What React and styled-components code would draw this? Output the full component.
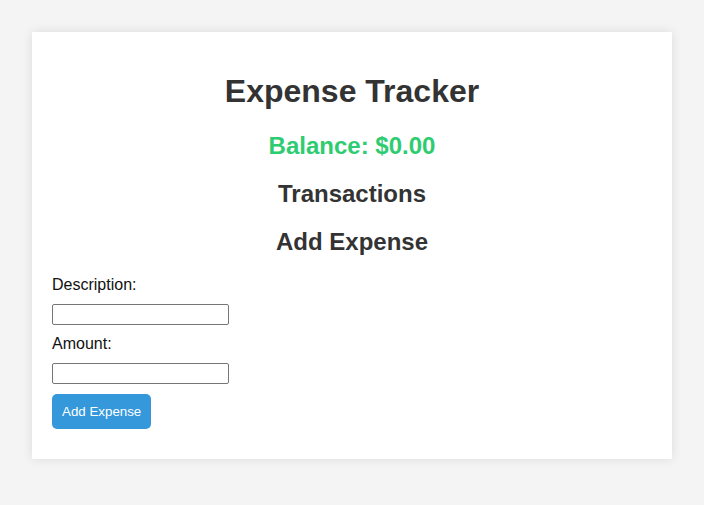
import React from "react";
import styled, { createGlobalStyle } from "styled-components";

const GlobalStyle = createGlobalStyle`
  html, body {
    margin: 0;
    padding: 0;
    background: #f4f4f4;
    font-family: "Liberation Sans", Arial, sans-serif;
    color: #333;
  }
`;

const Page = styled.div`
  padding: 32px 0;
`;

const Card = styled.div`
  width: 600px;
  margin: 0 auto;
  background: #fff;
  padding: 20px 20px 30px;
  box-shadow: 0 0 10px rgba(0, 0, 0, 0.1);
`;

const Title = styled.h1`
  font-size: 32px;
  font-weight: bold;
  text-align: center;
  margin: 21.44px 0;
  color: #333;
`;

const Heading = styled.h2`
  font-size: 24px;
  font-weight: bold;
  text-align: center;
  margin: 19.92px 0;
  color: ${(p) => (p.$accent ? "#2ecc71" : "#333")};
`;

const List = styled.ul`
  list-style: none;
  padding: 0;
  margin: 16px 0;
`;

const Form = styled.form`
  display: block;
`;

const Label = styled.label`
  display: block;
  font-size: 16px;
  color: #111;
  margin-bottom: 10px;
`;

const Input = styled.input`
  display: block;
  box-sizing: border-box;
  width: 177px;
  height: 21px;
  margin: 0 0 10px;
  padding: 1px 2px;
  border: 1px solid #767676;
  border-radius: 2px;
  font-family: "Liberation Sans", Arial, sans-serif;
  font-size: 13.33px;
  background: #fff;
`;

const Button = styled.button`
  display: block;
  background: #3498db;
  color: #fff;
  border: none;
  border-radius: 5px;
  padding: 10px;
  font-family: "Liberation Sans", Arial, sans-serif;
  font-size: 13.33px;
  line-height: normal;
  cursor: pointer;
`;

export default function App() {
  return (
    <>
      <GlobalStyle />
      <Page>
        <Card>
          <Title>Expense Tracker</Title>
          <Heading $accent>Balance: $0.00</Heading>
          <Heading>Transactions</Heading>
          <List />
          <Heading>Add Expense</Heading>
          <Form onSubmit={(e) => e.preventDefault()}>
            <Label htmlFor="desc">Description:</Label>
            <Input id="desc" type="text" />
            <Label htmlFor="amt">Amount:</Label>
            <Input id="amt" type="number" />
            <Button type="submit">Add Expense</Button>
          </Form>
        </Card>
      </Page>
    </>
  );
}
